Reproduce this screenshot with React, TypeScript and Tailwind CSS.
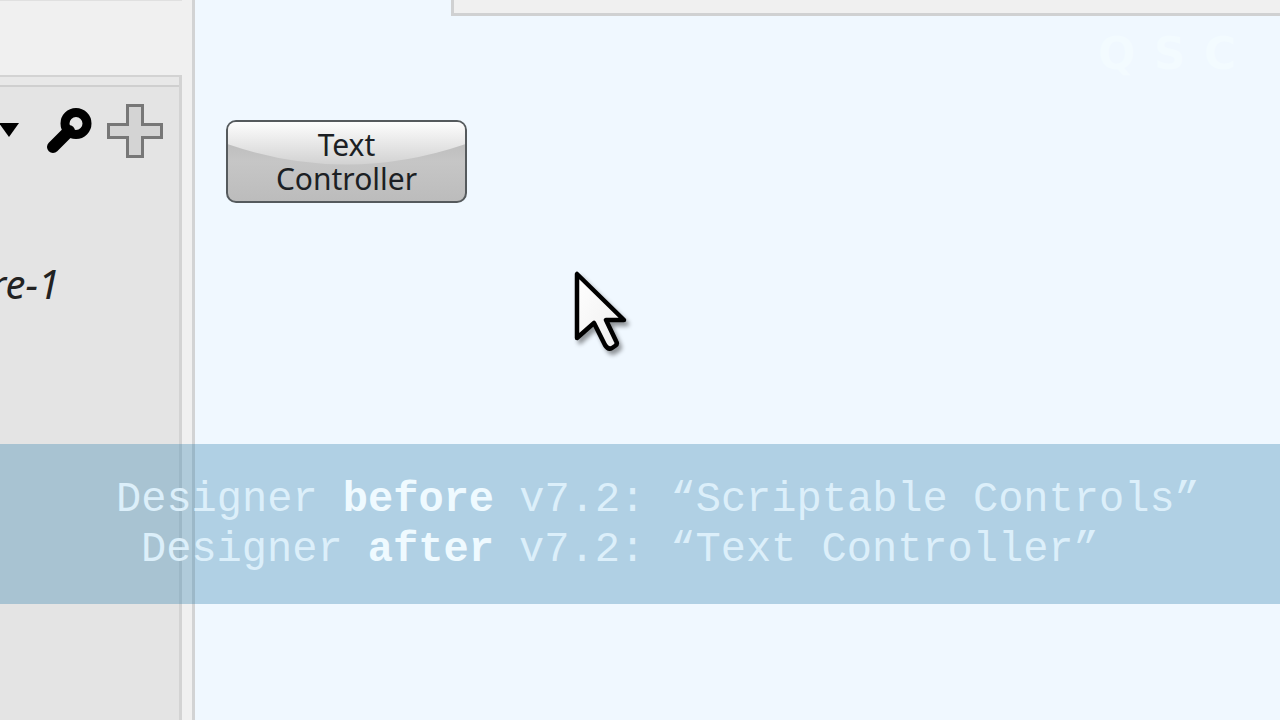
import React from 'react';

const CaretIcon = () => (
  <svg width="20" height="16" viewBox="0 0 20 16" aria-hidden="true">
    <path d="M0 0H20L10 14Z" fill="#000" />
  </svg>
);

const SearchIcon = () => (
  <svg width="46" height="50" viewBox="0 0 46 50" aria-hidden="true">
    <circle cx="30" cy="17.5" r="11" fill="none" stroke="#000" strokeWidth="9" />
    <path d="M23 25L7 41" stroke="#000" strokeWidth="12" strokeLinecap="round" />
  </svg>
);

const PlusIcon = () => (
  <svg width="56" height="54" viewBox="0 0 56 54" aria-hidden="true">
    <path
      d="M20.5 1.5H35.5V20.5H54.5V33.5H35.5V52.5H20.5V33.5H1.5V20.5H20.5Z"
      fill="#d4d4d4"
      stroke="#777"
      strokeWidth="3"
    />
  </svg>
);

const Pointer = () => (
  <svg
    className="absolute left-[570px] top-[266px] drop-shadow-[3px_4px_2px_rgba(0,0,0,0.4)]"
    width="64"
    height="90"
    viewBox="0 0 64 90"
    aria-hidden="true">
    <defs>
      <linearGradient id="pointer-fill" x1="0" y1="0" x2="1" y2="1">
        <stop offset="0" stopColor="#fff" />
        <stop offset="1" stopColor="#eee" />
      </linearGradient>
    </defs>
    <path
      d="M7 8V72L24 57L35 79Q38 84 42 82L45 80Q48 78 46 75L36 54H54Z"
      fill="url(#pointer-fill)"
      stroke="#000"
      strokeWidth="4.5"
      strokeLinejoin="round"
    />
  </svg>
);

const Sidebar: React.FC = () => (
  <aside className="flex w-[195px] shrink-0 flex-col border-r-[3px] border-[#d2d3d4] bg-[#f0f0f0] pr-2.5">
    <div className="h-[75px] shrink-0 border-t border-[#e0e0e0]" />
    <div className="flex-1 border-r-[3px] border-t-2 border-[#d3d3d3] bg-[#e4e4e4]">
      <div className="h-2 bg-[#e8e8e8]" />
      <div className="flex h-[90px] items-center border-t-2 border-[#cfcfcf]">
        <button type="button" aria-label="Options" className="-ml-px">
          <CaretIcon />
        </button>
        <button type="button" aria-label="Search" className="ml-[27px]">
          <SearchIcon />
        </button>
        <button type="button" aria-label="Add" className="ml-[15px]">
          <PlusIcon />
        </button>
      </div>
      <p className="mt-[81px] flex w-[60px] justify-end whitespace-nowrap font-['Noto_Sans',sans-serif] text-[40px] italic leading-[56px] text-[#222]">
        re-1
      </p>
    </div>
  </aside>
);

const ControllerBlock: React.FC = () => (
  <button
    type="button"
    className="relative w-[241px] overflow-hidden rounded-[10px] border-2 border-[#555a5d] bg-linear-to-b from-[#b4b4b4] via-[#c6c6c6] to-[#bcbcbc] pb-[5px] pt-1.5 font-['Noto_Sans',sans-serif] text-[30px] leading-[34px] text-[#1c1f24]">
    <svg
      className="absolute inset-0 size-full"
      viewBox="0 0 237 78"
      preserveAspectRatio="none"
      aria-hidden="true">
      <defs>
        <linearGradient id="gloss" x1="0" y1="0" x2="0" y2="1">
          <stop offset="0" stopColor="#fdfdfd" />
          <stop offset="1" stopColor="#d2d2d2" />
        </linearGradient>
      </defs>
      <path d="M0 0H237V22Q118 62 0 22Z" fill="url(#gloss)" />
    </svg>
    <span className="relative">
      Text
      <br />
      Controller
    </span>
  </button>
);

const Banner: React.FC = () => (
  <div className="absolute inset-x-0 top-[444px] bg-[rgba(57,134,177,0.35)] pb-[29px] pl-[116px] pt-[31px] font-['Liberation_Mono',monospace] text-[42px] leading-[50px] text-[#dceffa]">
    <p className="whitespace-nowrap">
      Designer <strong className="text-[#effaff]">before</strong> v7.2: “Scriptable Controls”
    </p>
    <p className="whitespace-nowrap pl-[25px]">
      Designer <strong className="text-[#effaff]">after</strong> v7.2: “Text Controller”
    </p>
  </div>
);

const App: React.FC = () => {
  return (
    <div className="relative flex h-screen overflow-hidden bg-[#f0f8ff]">
      <Sidebar />
      <main className="flex-1">
        <div className="ml-64 h-4 border-b-[3px] border-l-[3px] border-[#d0d1d2] bg-[#f0f0f0]" />
        <div className="flex items-start justify-between pl-[31px] pr-11">
          <div className="pt-[104px]">
            <ControllerBlock />
          </div>
          <p className="flex w-[138px] justify-between pt-4 font-['DejaVu_Sans',sans-serif] text-[44px] font-bold leading-[44px] text-[#f3fbff]">
            <span>Q</span>
            <span>S</span>
            <span>C</span>
          </p>
        </div>
      </main>
      <Pointer />
      <Banner />
    </div>
  );
};

export default App;
